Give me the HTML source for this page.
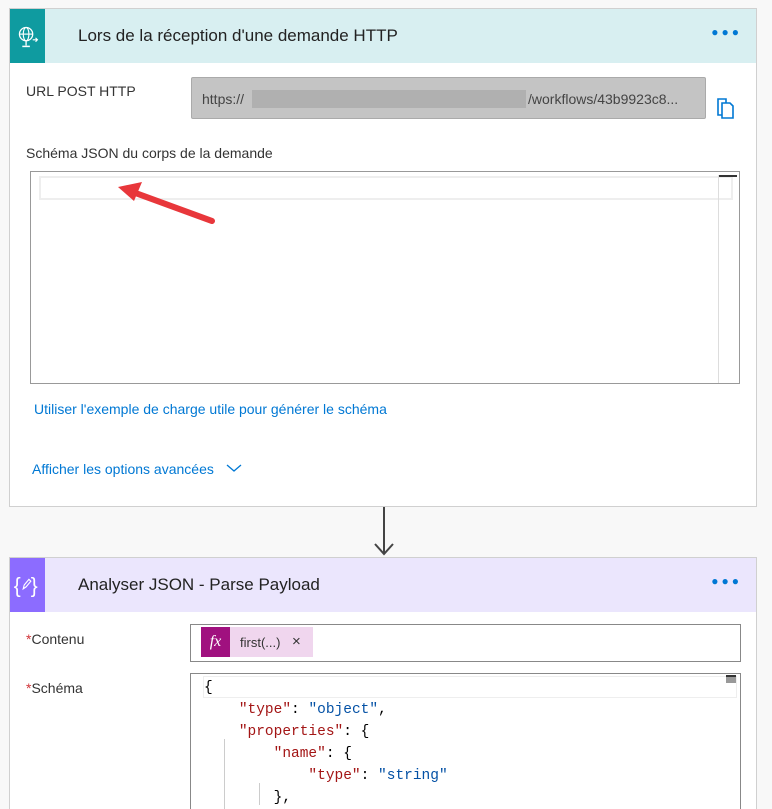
<!DOCTYPE html>
<html style="width:772px;height:809px;overflow:hidden"><head><style>
body{margin:0;width:772px;height:809px;background:#f8f8f8;font-family:"Liberation Sans",sans-serif;position:relative;overflow:hidden}
.card{position:absolute;left:9px;width:748px;background:#fff;border:1px solid #d0d0d0;box-sizing:border-box}
.hdr{position:absolute;left:0;top:0;right:0;height:54px}
.ico{position:absolute;left:0;top:0;width:35px;height:54px}
.ttl{position:absolute;left:68px;top:17px;font-size:17px;color:#222}
.dots{position:absolute;right:14px;top:16px;color:#0078d4;font-size:12px;letter-spacing:3px}
.abs{position:absolute}
.lbl{font-size:14px;color:#333}
.code{font-family:"Liberation Mono",monospace;font-size:14.5px;position:absolute;white-space:pre}
.k{color:#a31515}.s{color:#0451a5}
</style></head><body>
<div class="card" style="top:8px;height:499px">
 <div class="hdr" style="background:#d8eff1">
  <div class="ico" style="background:#0f9ba0;width:35px">
   <svg width="35" height="54" viewBox="0 0 37 54"><circle cx="17" cy="25" r="7" fill="none" stroke="#fff" stroke-width="1.4"/><ellipse cx="17" cy="25" rx="3" ry="7" fill="none" stroke="#fff" stroke-width="1.2"/><line x1="10" y1="25" x2="24" y2="25" stroke="#fff" stroke-width="1.2"/><line x1="17" y1="32" x2="17" y2="37" stroke="#fff" stroke-width="1.4"/><line x1="13" y1="38" x2="21" y2="38" stroke="#fff" stroke-width="1.6"/><path d="M24 31h5m-2-2 2 2-2 2" stroke="#fff" fill="none" stroke-width="1.2"/></svg>
  </div>
  <div class="ttl">Lors de la réception d'une demande HTTP</div>
  <div class="dots">●●●</div>
 </div>
 <div class="abs lbl" style="left:16px;top:74px">URL POST HTTP</div>
 <div class="abs" style="left:181px;top:68px;width:515px;height:42px;background:#c4c4c4;border:1px solid #aaa;border-radius:2px;box-sizing:border-box">
  <span class="abs" style="left:10px;top:13px;font-size:14px;color:#444">https://</span>
  <div class="abs" style="left:60px;top:12px;width:274px;height:18px;background:#b0b0b0"></div>
  <span class="abs" style="left:336px;top:13px;font-size:14px;color:#444">/workflows/43b9923c8...</span>
 </div>
 <svg class="abs" style="left:706px;top:88px" width="20" height="24"><path d="M2 2h8v16H2z" fill="#fff" stroke="#0078d4" stroke-width="1.6"/><path d="M6 6h8l3 3v12H6z" fill="#fff" stroke="#0078d4" stroke-width="1.6"/></svg>
 <div class="abs lbl" style="left:16px;top:136px">Schéma JSON du corps de la demande</div>
 <div class="abs" style="left:20px;top:162px;width:710px;height:213px;border:1px solid #999;box-sizing:border-box">
  <div class="abs" style="left:8px;top:4px;width:690px;height:20px;border:2px solid #eee"></div>
  <div class="abs" style="right:2px;top:3px;width:18px;height:2px;background:#333"></div>
  <div class="abs" style="right:20px;top:3px;width:1px;height:208px;background:#ddd"></div>
 </div>
 <svg class="abs" style="left:100px;top:170px" width="110" height="50"><line x1="102" y1="42" x2="20" y2="12" stroke="#e8373b" stroke-width="6" stroke-linecap="round"/><path d="M8 8 32 3 24 22z" fill="#e8373b"/></svg>
 <div class="abs" style="left:24px;top:392px;font-size:14px;color:#0078d4">Utiliser l'exemple de charge utile pour générer le schéma</div>
 <div class="abs" style="left:22px;top:452px;font-size:14px;color:#0078d4">Afficher les options avancées <svg width="20" height="12" style="margin-left:6px"><path d="M3 3l7 6 7-6" fill="none" stroke="#0078d4" stroke-width="1.3"/></svg></div>
</div>
<svg class="abs" style="left:372px;top:507px" width="24" height="52"><line x1="12" y1="0" x2="12" y2="46" stroke="#444" stroke-width="2"/><path d="M3 37l9 10 9-10" fill="none" stroke="#444" stroke-width="2"/></svg>
<div class="card" style="top:557px;height:252px;border-bottom:none;overflow:hidden">
 <div class="hdr" style="background:#ebe6fd">
  <div class="ico" style="background:#8c6cff;width:35px">
   <svg width="35" height="54" viewBox="0 0 37 54"><text x="4" y="35" font-size="22" fill="#fff" font-family="Liberation Sans">{</text><text x="22" y="35" font-size="22" fill="#fff" font-family="Liberation Sans">}</text><path d="M14 31l1-4 5-6 2 2-5 6z" fill="none" stroke="#fff" stroke-width="1.2"/></svg>
  </div>
  <div class="ttl">Analyser JSON - Parse Payload</div>
  <div class="dots">●●●</div>
 </div>
 <div class="abs lbl" style="left:16px;top:73px"><span style="color:#d13438">*</span>Contenu</div>
 <div class="abs lbl" style="left:16px;top:122px"><span style="color:#d13438">*</span>Schéma</div>
 <div class="abs" style="left:180px;top:66px;width:551px;height:38px;border:1px solid #888;box-sizing:border-box">
  <div class="abs" style="left:10px;top:2px;width:112px;height:30px;background:#f0d6ee"></div>
  <div class="abs" style="left:10px;top:2px;width:29px;height:30px;background:#a0117f;color:#fff;font-family:'Liberation Serif',serif;font-style:italic;font-size:16px;text-align:center;line-height:30px">fx</div>
  <span class="abs" style="left:49px;top:10px;font-size:13px;color:#333">first(...)</span>
  <span class="abs" style="left:101px;top:8px;font-size:15px;color:#333">×</span>
 </div>
 <div class="abs" style="left:180px;top:115px;width:551px;height:160px;border:1px solid #888;box-sizing:border-box">
  <div class="abs" style="left:12px;top:2px;width:532px;height:20px;border:1px solid #eee"></div>
  <div class="abs" style="right:4px;top:1px;width:10px;height:6px;background:#999;border-top:2px solid #333"></div>
  <div class="abs" style="left:33px;top:65px;width:1px;height:90px;background:#ccc"></div>
  <div class="abs" style="left:68px;top:109px;width:1px;height:22px;background:#ccc"></div>
  <div class="code" style="left:13px;top:3px;line-height:22px">{
    <span class="k">"type"</span>: <span class="s">"object"</span>,
    <span class="k">"properties"</span>: {
        <span class="k">"name"</span>: {
            <span class="k">"type"</span>: <span class="s">"string"</span>
        },</div>
 </div>
</div>
</body></html>
